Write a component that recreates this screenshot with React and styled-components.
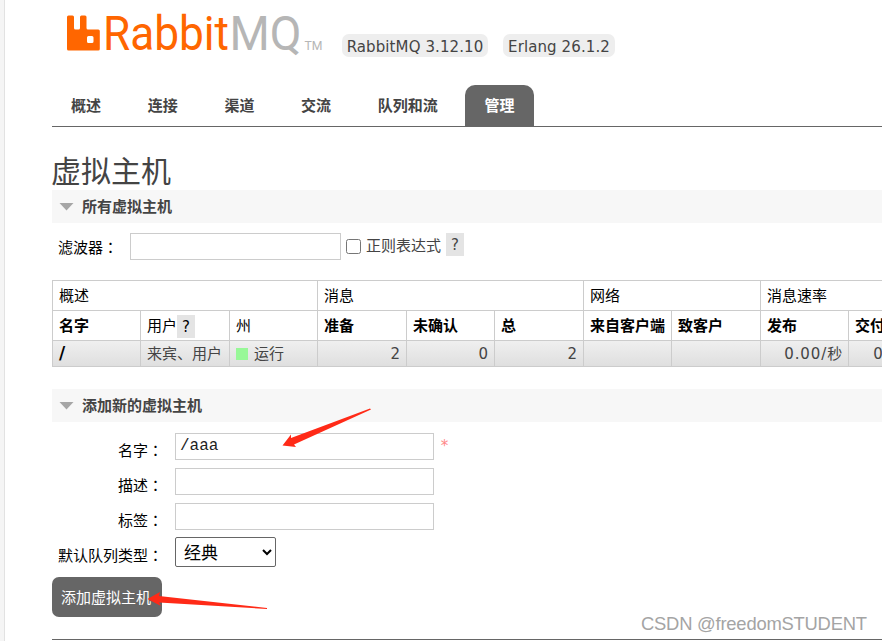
import React from "react";
import styled, { createGlobalStyle } from "styled-components";

const GlobalStyle = createGlobalStyle`
  * { box-sizing: border-box; }
  html, body { margin: 0; overflow: hidden; background: #fff; }
  body {
    font: 15px/20px "DejaVu Sans", "Noto Sans CJK SC", sans-serif;
    color: #444;
  }
`;

const Page = styled.div`
  position: relative;
  width: 882px;
  height: 641px;
  overflow: hidden;
  display: flex;
`;

const Gutter = styled.div`
  flex: none;
  width: 5px;
  background: #f5f5f5;
  border-right: 1px solid #e2e2e2;
`;

const Main = styled.main`
  flex: 1;
  min-width: 0;
  padding-left: 47px;
`;

const Header = styled.header`
  display: flex;
  height: 85px;
`;

const Logo = styled.svg`
  display: block;
  flex: none;
  width: 290px;
  height: 64px;
  font-family: Roboto, sans-serif;
`;

const Versions = styled.div`
  display: flex;
  gap: 15px;
  padding-top: 34px;
`;

const Version = styled.span`
  width: ${(p) => p.$width}px;
  height: 23px;
  line-height: 27px;
  border-radius: 7px;
  background: #eee;
  text-align: center;
  white-space: nowrap;
  letter-spacing: 0.1px;
`;

const Tabs = styled.nav`
  display: flex;
  gap: 7.7px;
  height: 42px;
  border-bottom: 1px solid #666;
`;

const Tab = styled.a`
  height: 41px;
  padding: 0 20px 0 19px;
  line-height: 43px;
  font-weight: 700;
  border-radius: 10px 10px 0 0;
  color: ${(p) => (p.$active ? "#fff" : "#444")};
  background: ${(p) => (p.$active ? "#666" : "transparent")};

  &:last-child { margin-left: -1px; padding-left: 20px; padding-right: 19px; }
`;

const Title = styled.h1`
  margin: 0 0 0 -1px;
  height: 63px;
  padding-top: 25px;
  font-size: 30px;
  line-height: 40px;
  font-weight: 400;
`;

const SectionBar = styled.h2`
  display: flex;
  align-items: center;
  gap: 8px;
  margin: 0;
  height: 33px;
  padding-left: 7px;
  font-size: 15px;
  background: #f7f7f7;
`;

const FilterRow = styled.div`
  display: flex;
  height: 57px;
  padding: 10px 0 0 6px;
`;

const FilterLabel = styled.label`
  width: 72px;
  line-height: 28px;
  color: #000;
`;

const Colon = styled.span`
  font-family: "Noto Sans CJK TC", sans-serif;
`;

const TextInput = styled.input`
  display: block;
  width: ${(p) => p.$width}px;
  height: 27px;
  padding: 0 5px 2px 4px;
  border: 1px solid #ccc;
  border-radius: 0;
  outline: none;
  background: #fff;
  color: #222;
  font: 16px "Liberation Mono", monospace;
`;

const Check = styled.input`
  width: 15px;
  height: 15px;
  margin: 6px 5px 0 5px;
`;

const CheckLabel = styled.span`
  line-height: 27px;
  margin-right: 5px;
`;

const Help = styled.span`
  display: inline-block;
  width: 18px;
  height: 23px;
  line-height: 25px;
  text-align: center;
  background: #e4e4e4;
  vertical-align: middle;
  font-weight: 400;
`;

const Table = styled.table`
  width: 974px;
  table-layout: fixed;
  border-spacing: 0;
  border-bottom: 1px solid #ccc;
  margin-bottom: 22px;
  color: #000;
`;

const Cell = styled.td`
  height: ${(p) => p.$h}px;
  padding: 1px 5px 0 6px;
  border: solid #ccc;
  border-width: 1px 0 0 1px;
  white-space: nowrap;
  line-height: 24px;
  font-weight: ${(p) => (p.$bold ? 700 : 400)};
  text-align: ${(p) => (p.$right ? "right" : "left")};
  letter-spacing: ${(p) => (p.$right ? "0.9px" : "normal")};
`;

const DataRow = styled.tr`
  background: linear-gradient(#f0f0f0, #dfdfdf);
  color: #444;
  td { padding-top: 0; }
`;

const Name = styled.b`
  color: #000;
  font-size: 17px;
`;

const Status = styled.span`
  display: inline-block;
  width: 12px;
  height: 12px;
  margin-right: 6px;
  background: #98f898;
  vertical-align: -1px;
`;

const Form = styled.form`
  padding-top: 11px;
`;

const Field = styled.div`
  display: grid;
  grid-template-columns: 111px 12px auto;
  height: ${(p) => p.$h || 35}px;
`;

const FieldLabel = styled.label`
  grid-column: 1;
  text-align: right;
  line-height: 34px;
  color: #000;
  white-space: nowrap;
`;

const Control = styled.div`
  grid-column: 3;
  display: flex;
`;

const Required = styled.span`
  margin: 3px 0 0 6px;
  color: #f88;
  font-family: "DejaVu Sans Mono", monospace;
`;

const Select = styled.select`
  width: 101px;
  height: 30px;
  margin-top: -1px;
  padding: 0 4px 4px;
  border: 1px solid #666;
  border-radius: 2px;
  background: #fff;
  color: #000;
  font: 17px "Noto Sans CJK SC", sans-serif;
`;

const Submit = styled.button`
  display: block;
  width: 110px;
  height: 40px;
  padding: 0 0 1px 9px;
  border: 0;
  border-radius: 7px;
  background: #666;
  color: #fff;
  text-align: left;
  font: 15px "Noto Sans CJK SC", sans-serif;
`;

const Rule = styled.hr`
  margin: 22px 0 0;
  border: 0;
  height: 1px;
  background: #666;
`;

const Arrow = styled.svg`
  position: absolute;
  left: ${(p) => p.$x}px;
  top: ${(p) => p.$y}px;
`;

const Watermark = styled.span`
  position: absolute;
  left: 641px;
  top: 613px;
  font: 18.4px/22px "Liberation Sans", sans-serif;
  letter-spacing: -0.22px;
  color: #a4a4a4;
  white-space: nowrap;
`;

const Triangle = () => (
  <svg width="15" height="8" viewBox="0 0 15 8">
    <path d="M0.5 0h14L7.5 7.5z" fill="#a6a6a6" />
  </svg>
);

const Section = ({ children }) => (
  <SectionBar><Triangle /><span>{children}</span></SectionBar>
);

const tabs = ["概述", "连接", "渠道", "交流", "队列和流", "管理"];
const columns = [88, 89, 88, 89, 88, 89, 88, 89, 88, 89, 89];
const groups = [["概述", 3], ["消息", 3], ["网络", 2], ["消息速率", 3]];

export default function App() {
  return (
    <>
      <GlobalStyle />
      <Page>
        <Gutter />
        <Main>
          <Header>
            <Logo viewBox="52 0 290 64">
              <path
                d="M68.500 15.500h4q1.500 0 1.500 1.500v11q0 1.500 1.500 1.500h3q1.500 0 1.500-1.500V17q0-1.500 1.500-1.500h3.500q1.500 0 1.500 1.500v11q0 1.500 1.500 1.500h10.300q1.500 0 1.500 1.500v18q0 1.500-1.500 1.500H68.500q-1.500 0-1.500-1.500V17q0-1.500 1.500-1.500zM88.500 36q-1.500 0-1.500 1.500v4q0 1.500 1.500 1.500h3.500q1.500 0 1.500-1.500v-4q0-1.500-1.500-1.500z"
                fill="#f60"
                fillRule="evenodd"
              />
              <text x="103" y="50" fontSize="48" fill="#f60" textLength="126" lengthAdjust="spacingAndGlyphs">Rabbit</text>
              <text x="229.500" y="50" fontSize="48" fill="#b6b6b6" textLength="72" lengthAdjust="spacingAndGlyphs">MQ</text>
              <text x="304.500" y="50" fontSize="12.500" fill="#b6b6b6" textLength="18" lengthAdjust="spacingAndGlyphs">TM</text>
            </Logo>
            <Versions>
              <Version $width={146}>RabbitMQ 3.12.10</Version>
              <Version $width={112}>Erlang 26.1.2</Version>
            </Versions>
          </Header>
          <Tabs>
            {tabs.map((t) => <Tab key={t} $active={t === "管理"}>{t}</Tab>)}
          </Tabs>
          <Title>虚拟主机</Title>
          <Section>所有虚拟主机</Section>
          <FilterRow>
            <FilterLabel>滤波器<Colon>：</Colon></FilterLabel>
            <TextInput $width={211} />
            <Check type="checkbox" />
            <CheckLabel>正则表达式</CheckLabel>
            <Help>?</Help>
          </FilterRow>
          <Table>
            <colgroup>{columns.map((w, i) => <col key={i} width={w} />)}</colgroup>
            <tbody>
              <tr>
                {groups.map(([g, span]) => <Cell key={g} $h={30} colSpan={span}>{g}</Cell>)}
              </tr>
              <tr>
                <Cell $h={30} $bold>名字</Cell>
                <Cell $h={30}>用户<Help>?</Help></Cell>
                <Cell $h={30}>州</Cell>
                {["准备", "未确认", "总", "来自客户端", "致客户", "发布", "交付", ""].map((h, i) => (
                  <Cell key={i} $h={30} $bold>{h}</Cell>
                ))}
              </tr>
              <DataRow>
                <Cell $h={26}><Name>/</Name></Cell>
                <Cell $h={26}>来宾、用户</Cell>
                <Cell $h={26}><Status />运行</Cell>
                {["2", "0", "2", "", "", "0.00/秒", "0.00/秒", ""].map((v, i) => (
                  <Cell key={i} $h={26} $right>{v}</Cell>
                ))}
              </DataRow>
            </tbody>
          </Table>
          <Section>添加新的虚拟主机</Section>
          <Form>
            <Field>
              <FieldLabel>名字<Colon>：</Colon></FieldLabel>
              <Control>
                <TextInput $width={259} defaultValue="/aaa" />
                <Required>*</Required>
              </Control>
            </Field>
            <Field>
              <FieldLabel>描述<Colon>：</Colon></FieldLabel>
              <Control><TextInput $width={259} /></Control>
            </Field>
            <Field>
              <FieldLabel>标签<Colon>：</Colon></FieldLabel>
              <Control><TextInput $width={259} /></Control>
            </Field>
            <Field $h={39}>
              <FieldLabel>默认队列类型<Colon>：</Colon></FieldLabel>
              <Control>
                <Select defaultValue="经典"><option>经典</option></Select>
              </Control>
            </Field>
            <Submit type="button">添加虚拟主机</Submit>
          </Form>
          <Rule />
        </Main>
        <Arrow $x={280} $y={405} width="95" height="45" viewBox="280 405 95 45">
          <path d="M282.500 445.500L291 434.500V438L370 408.500L371 409.500L294 444.500L296 447z" fill="#ff2a17" />
        </Arrow>
        <Arrow $x={145} $y={588} width="125" height="24" viewBox="145 588 125 24">
          <path d="M147.500 599L160 592L159 596L267 608V609L159 602.500L161 606z" fill="#ff2a17" />
        </Arrow>
        <Watermark>CSDN @freedomSTUDENT</Watermark>
      </Page>
    </>
  );
}
